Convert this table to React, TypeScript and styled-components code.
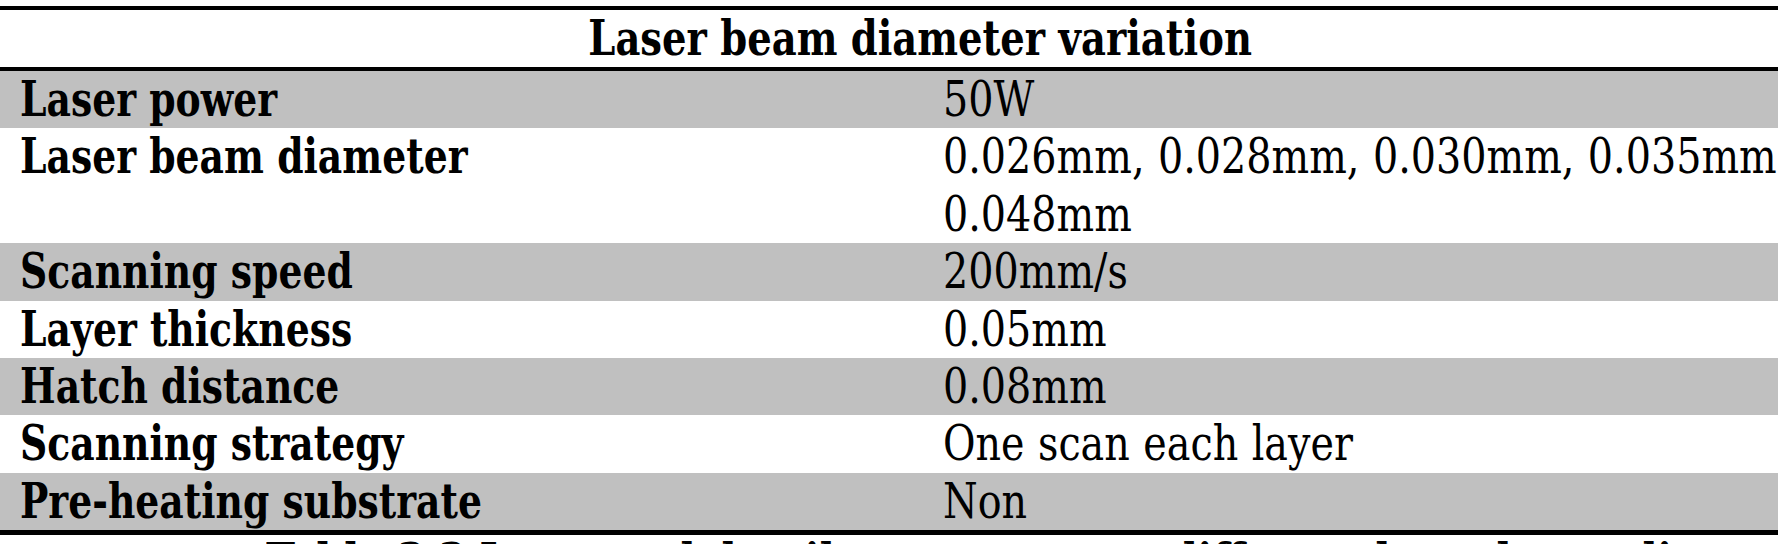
import React from "react";
import styled, { createGlobalStyle } from "styled-components";

const Global = createGlobalStyle`
  html, body {
    margin: 0;
    padding: 0;
    background: #ffffff;
    overflow: hidden;
  }
  body {
    font-family: "DejaVu Serif", "Liberation Serif", serif;
    color: #000000;
  }
`;

const Page = styled.div`
  width: 1778px;
  height: 544px;
  overflow: hidden;
  padding-top: 6px;
  box-sizing: border-box;
`;

const Table = styled.div`
  width: 1840px;
  display: flex;
  flex-direction: column;
`;

const Rule = styled.div<{ $h: number }>`
  height: ${(p) => p.$h}px;
  background: #000000;
`;

const TitleRow = styled.div`
  height: 57px;
  display: flex;
  justify-content: center;
  align-items: flex-start;
  font-size: 49px;
  line-height: 57px;
  font-weight: bold;
`;

const Row = styled.div<{ $shaded: boolean }>`
  display: grid;
  grid-template-columns: 925px 1fr;
  background: ${(p) => (p.$shaded ? "#c0c0c0" : "#ffffff")};
  font-size: 49px;
  line-height: 57.4px;
`;

const LabelCell = styled.div`
  padding-left: 20px;
  font-weight: bold;
  white-space: nowrap;
`;

const ValueCell = styled.div`
  padding-left: 18px;
  font-weight: normal;
  white-space: nowrap;
  word-spacing: 1px;
`;

const Squeeze = styled.span<{ $origin?: string; $scale: number }>`
  display: inline-block;
  transform: scaleX(${(p) => p.$scale});
  transform-origin: ${(p) => p.$origin ?? "left"} top;
  white-space: pre;
`;

const Caption = styled.div`
  margin-top: 2px;
  padding-left: 266px;
  font-size: 49px;
  line-height: 49px;
  font-weight: bold;
  white-space: nowrap;
`;

const rows: { label: string; value: string[] }[] = [
  { label: "Laser power", value: ["50W"] },
  {
    label: "Laser beam diameter",
    value: ["0.026mm, 0.028mm, 0.030mm, 0.035mm", "0.048mm"],
  },
  { label: "Scanning speed", value: ["200mm/s"] },
  { label: "Layer thickness", value: ["0.05mm"] },
  { label: "Hatch distance", value: ["0.08mm"] },
  { label: "Scanning strategy", value: ["One scan each layer"] },
  { label: "Pre-heating substrate", value: ["Non"] },
];

export default function App() {
  return (
    <>
      <Global />
      <Page>
        <Table>
          <Rule $h={4} />
          <TitleRow>
            <Squeeze $origin="center" $scale={0.786}>
              Laser beam diameter variation
            </Squeeze>
          </TitleRow>
          <Rule $h={4} />
          {rows.map((r, i) => (
            <Row key={r.label} $shaded={i % 2 === 0}>
              <LabelCell>
                <Squeeze $scale={0.77}>{r.label}</Squeeze>
              </LabelCell>
              <ValueCell>
                <Squeeze $scale={0.81}>{r.value.join("\n")}</Squeeze>
              </ValueCell>
            </Row>
          ))}
          <Rule $h={5} />
        </Table>
        <Caption>
          <Squeeze $scale={0.8}>
            Table 3.3 Input and detail parameters at different laser beam diameters
          </Squeeze>
        </Caption>
      </Page>
    </>
  );
}
